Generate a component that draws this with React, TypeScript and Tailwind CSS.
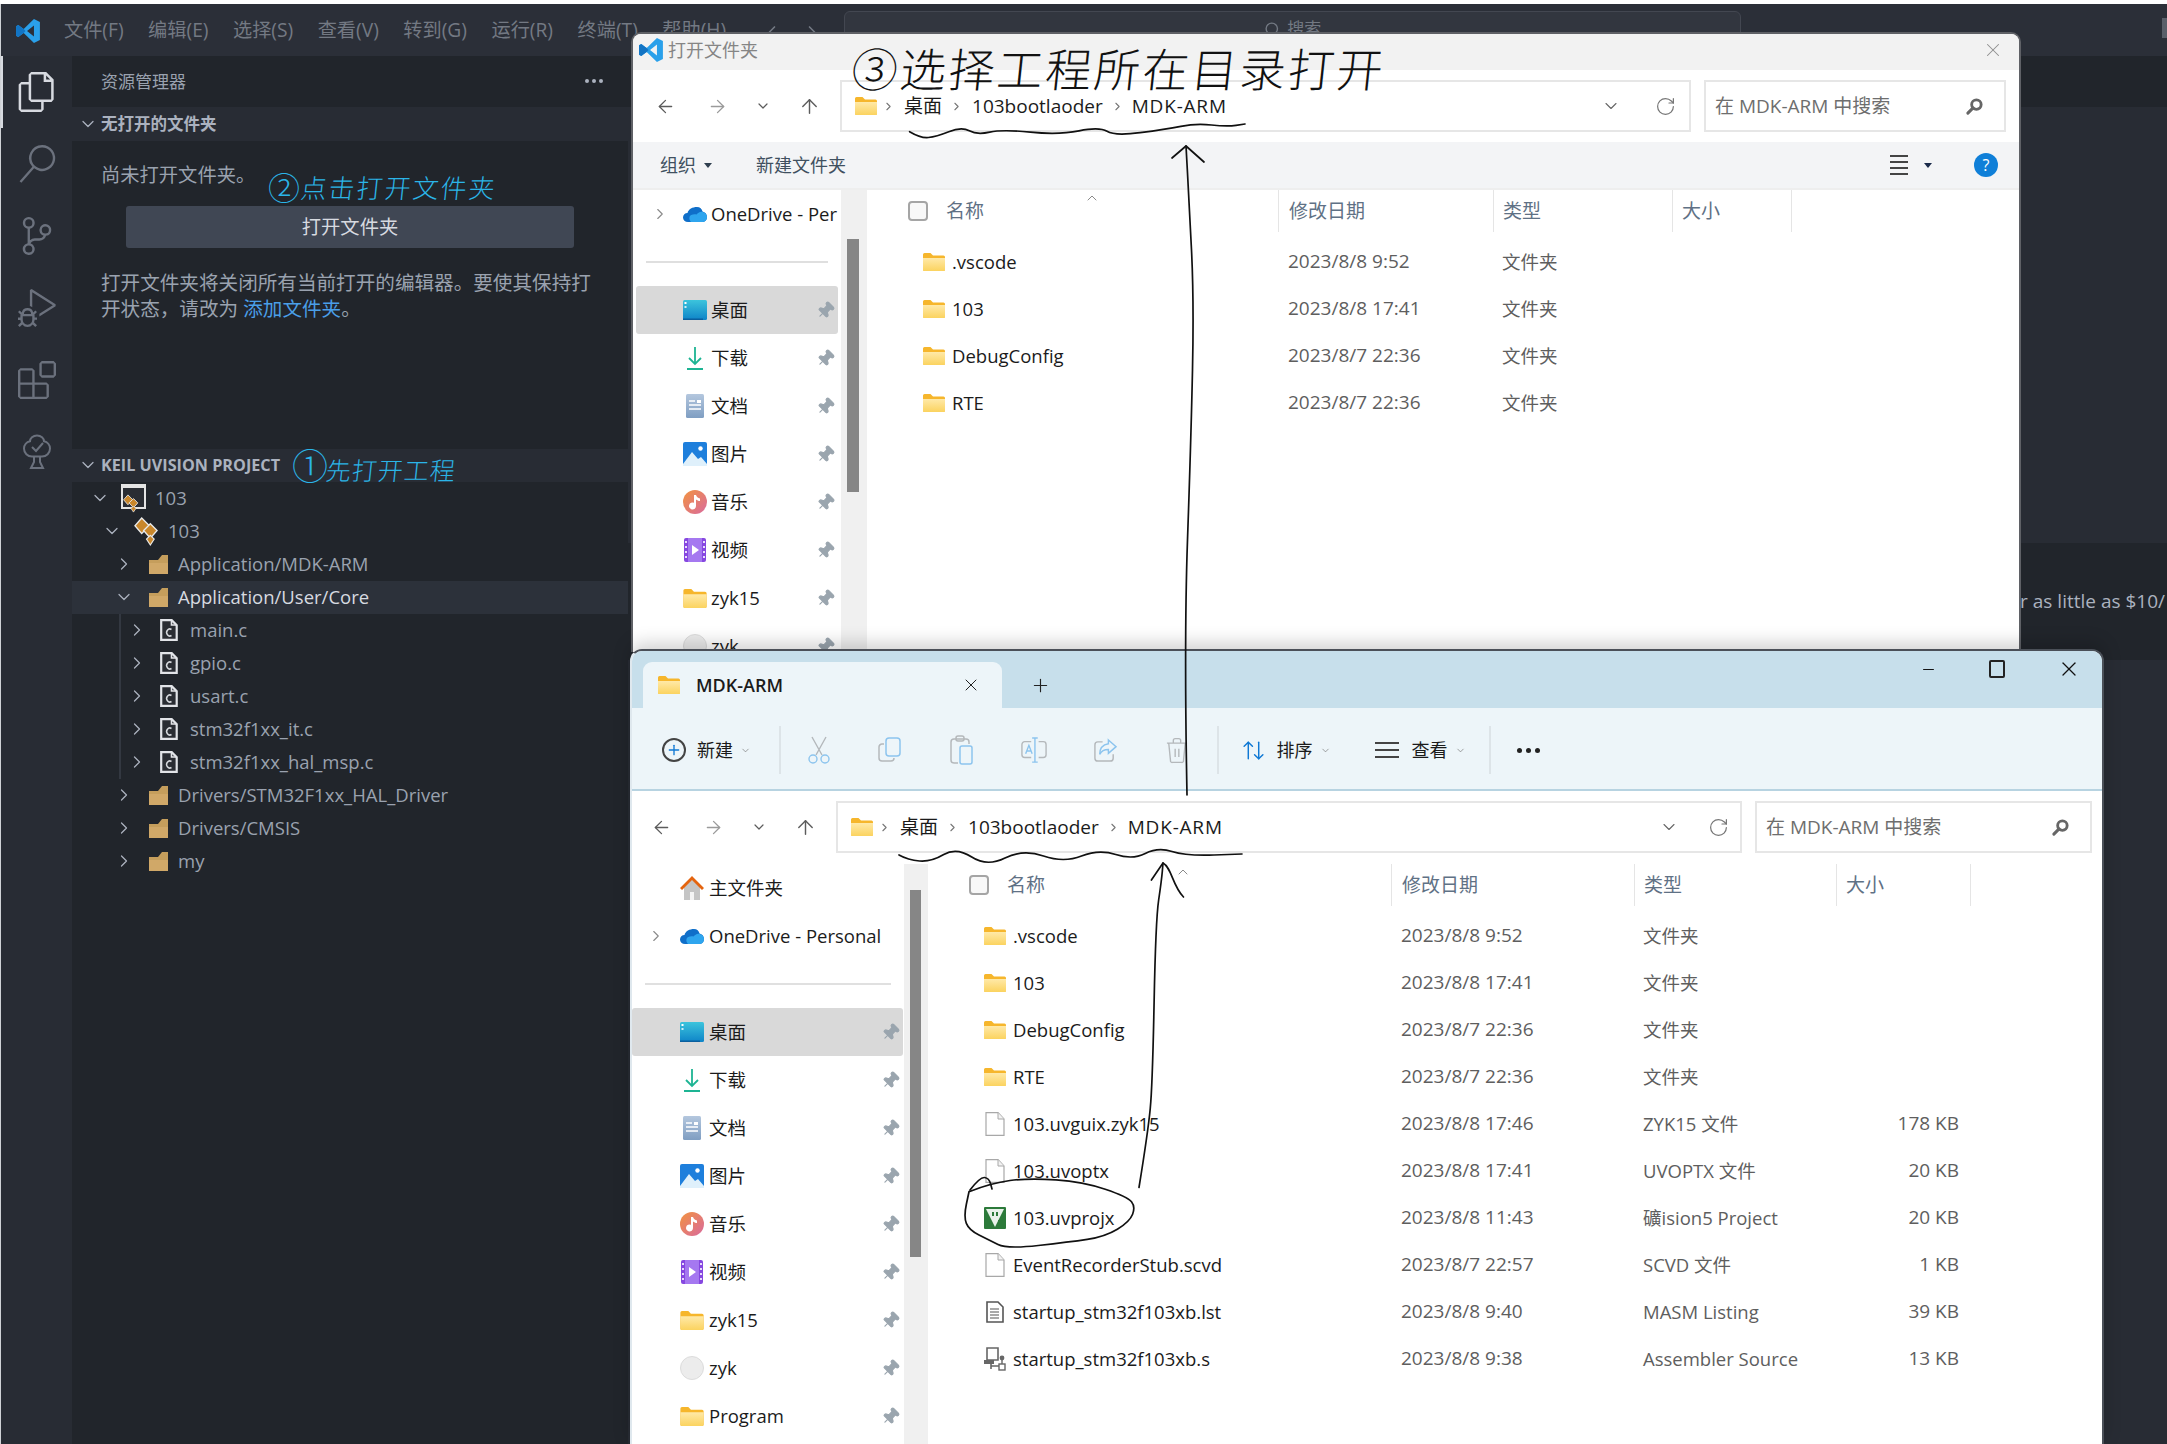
import React from "react";
import { ChevronDown, ChevronRight, Plus, X, Minus, Search, RotateCw, ArrowLeft, ArrowRight, ArrowUp, Pin, ArrowUpDown } from "lucide-react";
import { VscFiles, VscSearch, VscSourceControl, VscDebugAlt, VscExtensions } from "react-icons/vsc";

const smooth = (p: number[][]) => {
  let d = `M${p[0][0]} ${p[0][1]}`;
  for (let i = 1; i < p.length - 1; i++) {
    const mx = (p[i][0] + p[i + 1][0]) / 2;
    const my = (p[i][1] + p[i + 1][1]) / 2;
    d += ` Q${p[i][0]} ${p[i][1]} ${mx} ${my}`;
  }
  const l = p[p.length - 1];
  return d + ` L${l[0]} ${l[1]}`;
};

function VsLogo({ className }: { className: string }) {
  return (
    <svg viewBox="0 0 24 24" className={className}>
      <path d="M17.5 1 23 3.8v16.4L17.5 23 8 13.8 3 17.6 1 16.3V7.7l2-1.3 5 3.8Zm0 6-6.4 5 6.4 5Z" fill="#2aa0ea" fillRule="evenodd" />
      <path d="M3 6.4 1 7.7v8.6l2 1.3 5-3.8 1.7-1.8L8 10.2Z" fill="#1274c4" />
    </svg>
  );
}

function TreeCheckIcon() {
  return (
    <svg viewBox="0 0 32 36" className="w-[32px] h-[36px]" fill="none" stroke="#6b717d" strokeWidth="2">
      <path d="M16 1.5c4 0 7 3 7 5.8 3.5.8 6 3.8 6 7.2 0 4.600-3.600 8-8 8H11c-4.400 0-8-3.400-8-8 0-3.400 2.500-6.400 6-7.200C9 4.500 12 1.500 16 1.500Z" />
      <path d="M11 13l4 4 7-8" />
      <path d="M13 23v5l-3 6h12l-3-6v-5" />
    </svg>
  );
}

function TreeFolder() {
  return (
    <svg viewBox="0 0 19 19" className="w-[19px] h-[19px]">
      <path d="M0 5h9l4-5h6v19H0Z" fill="#c59e5c" />
      <path d="M0 8h19v11H0Z" fill="#d0a868" />
    </svg>
  );
}

function CFile() {
  return (
    <svg viewBox="0 0 18 22" className="w-[18px] h-[22px]">
      <path d="M1.200 1.200h10.500l5 5v14.600H1.200Z" fill="#2a2d33" stroke="#e2e4e8" strokeWidth="2.200" />
      <path d="M11.500 1v5H17" fill="none" stroke="#e2e4e8" strokeWidth="1.600" />
      <path d="M11.500 10.500a3.200 3.500 0 1 0 0 6" fill="none" stroke="#d5d8dc" strokeWidth="1.500" />
    </svg>
  );
}

function Diamonds({ className }: { className: string }) {
  return (
    <svg viewBox="0 0 26 30" className={className}>
      <path d="M8 1 16 9 8 17 1 9Z" fill="#c9872b" stroke="#e9e9e9" strokeWidth="1.400" />
      <path d="M17 7 24 14 17 22 10 14Z" fill="#c9872b" stroke="#e9e9e9" strokeWidth="1.400" />
      <path d="M17 19 21 23 17 29 13 23Z" fill="#c9872b" stroke="#e9e9e9" strokeWidth="1.200" />
    </svg>
  );
}

function ProjectIcon() {
  return (
    <div className="relative w-[25px] h-[29px]">
      <div className="absolute left-0 top-0 w-[25px] h-[25px] border-2 border-[#e4e4e4] border-t-[4px] bg-[#2a2d33]" />
      <Diamonds className="absolute left-[2px] top-[10px] w-[16px] h-[19px]" />
    </div>
  );
}

function TreeRow({ pl, open, icon, label, active, iconGap, textGap }: { pl: string; open?: boolean; icon: React.ReactNode; label: string; active?: boolean; iconGap: string; textGap: string }) {
  return (
    <div className={`flex items-center h-[33px] whitespace-nowrap text-[18.500px] ${pl} ${active ? "bg-[#2c313a] text-[#d7dae0]" : "text-[#9aa2af]"}`}>
      {open ? <ChevronDown size={20} strokeWidth={1.500} className="text-[#abb2bf] shrink-0" /> : <ChevronRight size={20} strokeWidth={1.500} className="text-[#abb2bf] shrink-0" />}
      <span className={`flex items-center ${iconGap}`}>{icon}</span>
      <span className={textGap}>{label}</span>
    </div>
  );
}

function VsSidebar() {
  return (
    <div className="w-[556px] shrink-0 bg-[#21252b] flex flex-col text-[#abb2bf] text-[19px]">
      <div className="h-[51px] flex items-center justify-between pl-[29px] pr-[25px] text-[17px] text-[#9aa2af]">
        <span>资源管理器</span>
        <span className="flex gap-[3px] pb-[2px]">
          <i className="w-[4px] h-[4px] rounded-full bg-[#abb2bf]" />
          <i className="w-[4px] h-[4px] rounded-full bg-[#abb2bf]" />
          <i className="w-[4px] h-[4px] rounded-full bg-[#abb2bf]" />
        </span>
      </div>
      <div className="h-[34px] bg-[#282c34] flex items-center pl-[6px] gap-[3px] text-[16.500px] font-bold">
        <ChevronDown size={20} strokeWidth={1.500} />
        <span>无打开的文件夹</span>
      </div>
      <div className="h-[308px] pl-[29px] pr-[30px] text-[19.600px] leading-[26px] text-[#9aa2af]">
        <p className="mt-[21px] text-[19.300px]">尚未打开文件夹。</p>
        <div className="ml-[25px] mt-[18px] w-[448px] h-[42px] rounded-[3px] bg-[#404754] text-[#d7dae0] text-[19.300px] flex items-center justify-center">打开文件夹</div>
        <p className="mt-[22px] w-[495px]">打开文件夹将关闭所有当前打开的编辑器。要使其保持打开状态，请改为 <span className="text-[#4a9fe8]">添加文件夹</span>。</p>
      </div>
      <div className="h-[32.500px] bg-[#282c34] flex items-center pl-[6px] gap-[3px] text-[16.200px] font-bold">
        <ChevronDown size={20} strokeWidth={1.500} />
        <span>KEIL UVISION PROJECT</span>
      </div>
      <div className="relative">
        <TreeRow pl="pl-[18px]" open icon={<ProjectIcon />} label="103" iconGap="ml-[11px]" textGap="ml-[9px]" />
        <TreeRow pl="pl-[30px]" open icon={<Diamonds className="w-[25px] h-[29px]" />} label="103" iconGap="ml-[12px]" textGap="ml-[9px]" />
        <TreeRow pl="pl-[42px]" icon={<TreeFolder />} label="Application/MDK-ARM" iconGap="ml-[15px]" textGap="ml-[10px]" />
        <TreeRow pl="pl-[42px]" open active icon={<TreeFolder />} label="Application/User/Core" iconGap="ml-[15px]" textGap="ml-[10px]" />
        <div className="border-l-2 border-[#333841] ml-[47px] pl-[6px]">
          {["main.c", "gpio.c", "usart.c", "stm32f1xx_it.c", "stm32f1xx_hal_msp.c"].map((f) => (
            <TreeRow key={f} pl="pl-[0px]" icon={<CFile />} label={f} iconGap="ml-[13px]" textGap="ml-[12px]" />
          ))}
        </div>
        <TreeRow pl="pl-[42px]" icon={<TreeFolder />} label="Drivers/STM32F1xx_HAL_Driver" iconGap="ml-[15px]" textGap="ml-[10px]" />
        <TreeRow pl="pl-[42px]" icon={<TreeFolder />} label="Drivers/CMSIS" iconGap="ml-[15px]" textGap="ml-[10px]" />
        <TreeRow pl="pl-[42px]" icon={<TreeFolder />} label="my" iconGap="ml-[15px]" textGap="ml-[10px]" />
      </div>
    </div>
  );
}

function VsCode() {
  const menus = ["文件(F)", "编辑(E)", "选择(S)", "查看(V)", "转到(G)", "运行(R)", "终端(T)", "帮助(H)"];
  return (
    <div className="flex-1 flex flex-col min-h-0 border-l border-l-[#cfd2d6]">
      <div className="h-[52px] bg-[#2b2f38] flex items-start shrink-0">
        <div className="w-[63px] pl-[14px] pt-[14px] shrink-0"><VsLogo className="w-[26px] h-[26px]" /></div>
        <div className="flex gap-[24.500px] pt-[14px] text-[19.200px] leading-[24px] text-[#737983] whitespace-nowrap">
          {menus.map((m) => <span key={m}>{m}</span>)}
        </div>
        <div className="flex ml-[36px] gap-[20px] pt-[18px] text-[#737983]">
          <ChevronRight size={20} className="rotate-180" />
          <ChevronRight size={20} />
        </div>
        <div className="ml-[22px] mt-[7px] w-[897px] h-[36px] rounded-[6px] bg-[#32363f] border border-[#434751] flex items-center justify-center gap-[6px] text-[17px] text-[#737983]">
          <Search size={17} /> <span>搜索</span>
        </div>
        <div className="ml-auto mt-[14px] w-[5px] h-[20px] bg-[#5a5f69]" />
      </div>
      <div className="flex flex-1 min-h-0">
        <div className="w-[71px] shrink-0 bg-[#282c34] flex flex-col text-[#6b717d]">
          <div className="relative h-[72px] flex items-center justify-center text-[#d7dae0]">
            <div className="absolute left-0 top-0 h-[72px] w-[2px] bg-[#d7dae0]" />
            <VscFiles size={40} />
          </div>
          <div className="h-[72px] flex items-center justify-center"><VscSearch size={38} /></div>
          <div className="h-[72px] flex items-center justify-center"><VscSourceControl size={38} /></div>
          <div className="h-[72px] flex items-center justify-center"><VscDebugAlt size={38} /></div>
          <div className="h-[72px] flex items-center justify-center"><VscExtensions size={38} /></div>
          <div className="h-[72px] flex items-center justify-center"><TreeCheckIcon /></div>
        </div>
        <VsSidebar />
        <div className="flex-1 flex flex-col bg-[#282c34]">
          <div className="h-[51px] bg-[#21252b] shrink-0" />
          <div className="h-[436px] shrink-0" />
          <div className="h-[117px] bg-[#21252b] flex items-center justify-end pr-[2px] text-[19px] text-[#abb2bf] whitespace-nowrap shrink-0">or as little as $10/</div>
        </div>
      </div>
    </div>
  );
}

function YFolder({ className = "w-[22px] h-[18px]" }: { className?: string }) {
  return (
    <svg viewBox="0 0 22 18" className={className}>
      <defs>
        <linearGradient id="fy" x1="0" y1="0" x2="0" y2="1">
          <stop offset="0" stopColor="#ffe9a8" />
          <stop offset="1" stopColor="#fbd35f" />
        </linearGradient>
      </defs>
      <path d="M0 1.500A1.500 1.500 0 0 1 1.500 0h6L10 2.500h10.500A1.500 1.500 0 0 1 22 4v12.500a1.500 1.500 0 0 1-1.500 1.500h-19A1.500 1.500 0 0 1 0 16.500Z" fill="#f6b62c" />
      <path d="M0 5h22v11.500a1.500 1.500 0 0 1-1.500 1.500h-19A1.500 1.500 0 0 1 0 16.500Z" fill="url(#fy)" />
    </svg>
  );
}

function Crumbs() {
  const Chev = ({ cls }: { cls: string }) => <ChevronRight size={13} strokeWidth={2} className={`text-[#777] shrink-0 ${cls}`} />;
  return (
    <div className="flex items-center pl-[13px] flex-1 min-w-0 whitespace-nowrap text-[#1b1b1b]">
      <YFolder />
      <Chev cls="ml-[5px]" />
      <span className="ml-[9px]">桌面</span>
      <Chev cls="ml-[8px]" />
      <span className="ml-[9px]">103bootlaoder</span>
      <Chev cls="ml-[8px]" />
      <span className="ml-[8px] tracking-[0.800px]">MDK-ARM</span>
    </div>
  );
}

function NavBar({ cls, left, boxW, searchW, h, vGap, rGap }: { cls: string; left: string; boxW: string; searchW: string; h: string; vGap: string; rGap: string }) {
  return (
    <div className={`flex items-start bg-white shrink-0 ${cls} ${left}`}>
      <div className={`w-[52px] ${h} flex items-center justify-center text-[#5c5c5c]`}><ArrowLeft size={21} strokeWidth={1.500} /></div>
      <div className={`w-[52px] ${h} flex items-center justify-center text-[#9a9a9a]`}><ArrowRight size={21} strokeWidth={1.500} /></div>
      <div className={`w-[40px] ${h} flex items-center justify-center text-[#5c5c5c]`}><ChevronDown size={16} strokeWidth={1.800} /></div>
      <div className={`w-[52px] ${h} flex items-center justify-center text-[#5c5c5c]`}><ArrowUp size={23} strokeWidth={1.500} /></div>
      <div className={`${boxW} ${h} ml-[5px] border-2 border-[#e6e6e6] flex items-center`}>
        <Crumbs />
        <ChevronDown size={20} strokeWidth={1.300} className={`text-[#666] ${vGap}`} />
        <RotateCw size={21} strokeWidth={1.400} className={`text-[#777] ${rGap}`} />
      </div>
      <div className={`${searchW} ${h} ml-[13px] border-2 border-[#e6e6e6] flex items-center justify-between pl-[9px] pr-[20px] text-[#6e6e6e] whitespace-nowrap`}>
        <span>在 MDK-ARM 中搜索</span>
        <svg viewBox="0 0 20 20" className="w-[19px] h-[21px]">
          <circle cx="12" cy="8" r="5" fill="none" stroke="#666" strokeWidth="3" />
          <path d="M8.500 11.500 3 17" stroke="#666" strokeWidth="3.200" strokeLinecap="round" />
        </svg>
      </div>
    </div>
  );
}

function PinIcon() {
  return <Pin size={19} strokeWidth={1.500} className="text-[#9aa5ae] fill-[#9aa5ae] rotate-45 shrink-0" />;
}

const Desktop = () => (
  <svg viewBox="0 0 24 20" className="w-[24px] h-[20px]">
    <defs><linearGradient id="dk" x1="0" y1="0" x2="0" y2="1"><stop offset="0" stopColor="#3cc4dc" /><stop offset="1" stopColor="#0e84c8" /></linearGradient></defs>
    <rect width="24" height="20" rx="1.500" fill="url(#dk)" />
    <rect x="1.500" y="2" width="2" height="2" fill="#fff" />
    <rect x="1.500" y="6" width="2" height="2" fill="#cfeef5" />
    <rect x="0" y="18.500" width="20" height="1.500" fill="#0a5f9e" />
  </svg>
);
const Download = () => (
  <svg viewBox="0 0 24 24" className="w-[24px] h-[24px]" fill="none" stroke="#1db493" strokeWidth="1.800">
    <path d="M12 1v17M6 12l6 6 6-6" />
    <path d="M4 23h16" strokeWidth="2" />
  </svg>
);
const Docs = () => (
  <svg viewBox="0 0 20 24" className="w-[20px] h-[24px]">
    <defs><linearGradient id="dc" x1="0" y1="0" x2="0" y2="1"><stop offset="0" stopColor="#b4c7de" /><stop offset="1" stopColor="#7f9ec2" /></linearGradient></defs>
    <rect x="1" width="18" height="24" rx="1.500" fill="url(#dc)" />
    <path d="M4 7h6M4 11h12M4 15h12" stroke="#fff" strokeWidth="1.400" />
    <path d="M12 6h4v3h-4Z" fill="#fff" />
  </svg>
);
const Pictures = () => (
  <svg viewBox="0 0 24 24" className="w-[24px] h-[24px]">
    <rect width="24" height="24" rx="2" fill="#1e7fdc" />
    <circle cx="17.500" cy="6.500" r="2.200" fill="#fff" />
    <path d="M0 22 9 10l6 7 3-2 6 7v2H0Z" fill="#dff0fb" />
  </svg>
);
const Music = () => (
  <svg viewBox="0 0 24 24" className="w-[24px] h-[24px]">
    <defs><linearGradient id="ms" x1="0" y1="0" x2="1" y2="1"><stop offset="0" stopColor="#f2933f" /><stop offset="1" stopColor="#d96a9e" /></linearGradient></defs>
    <circle cx="12" cy="12" r="12" fill="url(#ms)" />
    <path d="M11 5h2c.5 2 2 3 4 3.500V11c-1.500 0-3-.6-4-1.500V16a3.500 3.500 0 1 1-2-3.200Z" fill="#fff" />
  </svg>
);
const Video = () => (
  <svg viewBox="0 0 22 24" className="w-[22px] h-[24px]">
    <rect width="22" height="24" rx="2" fill="#8647e0" />
    <rect x="4" y="0" width="14" height="24" fill="#a578f0" />
    <path d="M8 7v10l7-5Z" fill="#fff" />
    <path d="M1 3h2v2H1ZM1 8h2v2H1ZM1 13h2v2H1ZM1 18h2v2H1ZM19 3h2v2h-2ZM19 8h2v2h-2ZM19 13h2v2h-2ZM19 18h2v2h-2Z" fill="#e8dcfb" />
  </svg>
);
const Avatar = () => <div className="w-[24px] h-[24px] rounded-full bg-[#ececec] border border-[#dcdcdc]" />;
const Cloud = () => (
  <svg viewBox="0 0 24 16" className="w-[24px] h-[16px]">
    <path d="M14 1c3 0 5 2 5.500 4.500C22 6 24 8 24 11c0 3-2 5-5 5H5c-3 0-5-2-5-4.500S2 7 4.500 7C5.500 3 9.500 1 14 1Z" fill="#0f6fc9" />
    <path d="M8 16h11c3 0 5-2 5-5 0-2.500-2-4.500-4-5-3-1-5 1-6.500 2.500C10 8 7 9 6.500 11 6 13 7 15 8 16Z" fill="#2ea5ee" />
  </svg>
);
const Home = () => (
  <svg viewBox="0 0 24 24" className="w-[24px] h-[24px]">
    <path d="M4 11v13h16V11L12 3Z" fill="#c5c5c5" />
    <path d="M10 24v-8h4v8Z" fill="#f4f4f4" />
    <path d="M0 12 12 0l12 12-2 2L12 4 2 14Z" fill="#e4640f" />
  </svg>
);

function NavRow({ icon, label, selected, pin = true, chevron, indent, gap, cls = "mx-[3px]" }: { icon: React.ReactNode; label: string; selected?: boolean; pin?: boolean; chevron?: boolean; indent: string; gap: string; cls?: string }) {
  return (
    <div className={`relative h-[48px] flex items-center rounded-[3px] whitespace-nowrap ${cls} ${indent} pr-[3px] text-[#1b1b1b] ${selected ? "bg-[#d9d9d9]" : ""}`}>
      {chevron && <span className="absolute left-[15px] text-[#8a8a8a]"><ChevronRight size={18} strokeWidth={1.500} /></span>}
      <span className="w-[24px] h-[24px] flex items-center justify-center shrink-0">{icon}</span>
      <span className={`${gap} text-[18.500px]`}>{label}</span>
      {pin && <span className="ml-auto"><PinIcon /></span>}
    </div>
  );
}

type Row = { icon: React.ReactNode; name: string; date: string; type: string; size?: string };

function FileList({ cols, rows, headH, pt, caretR }: { cols: string; rows: Row[]; headH: string; pt: string; caretR: string }) {
  return (
    <div className="flex-1 min-w-0 bg-white whitespace-nowrap">
      <div className={`grid ${cols} ${headH} text-[#5f7185] relative`}>
        <div className="relative flex items-center pl-[41px] gap-[18px]">
          <span className="w-[20px] h-[20px] rounded-[4px] border-2 border-[#a5a5a5] bg-[#f8f8f8]" />
          <span>名称</span>
          <ChevronDown size={16} strokeWidth={1.500} className={`absolute ${caretR} top-[0px] rotate-180 text-[#8a8a8a]`} />
        </div>
        <div className="border-l border-[#e5e5e5] pl-[10px] flex items-center">修改日期</div>
        <div className="border-l border-[#e5e5e5] pl-[9px] flex items-center">类型</div>
        <div className="border-x border-[#e5e5e5] pl-[9px] flex items-center">大小</div>
      </div>
      <div className={pt}>
        {rows.map((r) => (
          <div key={r.name} className={`grid ${cols} h-[47px] items-center text-[#5e5e5e]`}>
            <div className="flex items-center pl-[56px] gap-[7px] text-[#1b1b1b] text-[18.500px]">
              <span className="w-[22px] flex justify-center">{r.icon}</span>
              <span>{r.name}</span>
            </div>
            <div className="pl-[10px]">{r.date}</div>
            <div className="pl-[9px] text-[18.500px]">{r.type}</div>
            <div className="text-right pr-[12px]">{r.size}</div>
          </div>
        ))}
      </div>
    </div>
  );
}

const WhiteFile = () => (
  <svg viewBox="0 0 20 24" className="w-[20px] h-[24px]">
    <path d="M1 .7h12L19 7v16.300H1Z" fill="#fff" stroke="#a8a8a8" strokeWidth="1.200" />
    <path d="M13 .7V7h6" fill="#f2f2f2" stroke="#a8a8a8" strokeWidth="1" />
  </svg>
);
const UvIcon = () => (
  <svg viewBox="0 0 22 22" className="w-[22px] h-[22px]">
    <rect width="22" height="22" rx="1" fill="#2c7a3a" />
    <path d="M2 2h18L11 20Z" fill="#e8f2ea" />
    <path d="M8 5v4h2V5ZM12 5v4h2V5Z" fill="#2c7a3a" />
    <path d="M14 13h5v7h-5Z" fill="#2c7a3a" />
  </svg>
);
const LstIcon = () => (
  <svg viewBox="0 0 18 22" className="w-[18px] h-[22px]">
    <path d="M1 1h11l5 5v15H1Z" fill="#fff" stroke="#555" strokeWidth="1.600" />
    <path d="M4 8h9M4 11h9M4 14h9M4 17h9" stroke="#555" strokeWidth="1.200" />
  </svg>
);
const AsmIcon = () => (
  <svg viewBox="0 0 22 24" className="w-[22px] h-[24px]">
    <path d="M3 1h11v12H3Z" fill="#fff" stroke="#666" strokeWidth="1.600" />
    <path d="M0 13h10v4H0Z" fill="#666" />
    <path d="M7 17v5" stroke="#666" strokeWidth="1.600" />
    <circle cx="18" cy="11" r="2.400" fill="#666" />
    <path d="M18 13v5M7 19h8" stroke="#666" strokeWidth="1.400" />
    <rect x="15" y="17" width="6" height="6" fill="#fff" stroke="#666" strokeWidth="1.400" />
  </svg>
);

const dialogRows: Row[] = [
  { icon: <YFolder />, name: ".vscode", date: "2023/8/8 9:52", type: "文件夹" },
  { icon: <YFolder />, name: "103", date: "2023/8/8 17:41", type: "文件夹" },
  { icon: <YFolder />, name: "DebugConfig", date: "2023/8/7 22:36", type: "文件夹" },
  { icon: <YFolder />, name: "RTE", date: "2023/8/7 22:36", type: "文件夹" },
];

const allRows: Row[] = [
  ...dialogRows,
  { icon: <WhiteFile />, name: "103.uvguix.zyk15", date: "2023/8/8 17:46", type: "ZYK15 文件", size: "178 KB" },
  { icon: <WhiteFile />, name: "103.uvoptx", date: "2023/8/8 17:41", type: "UVOPTX 文件", size: "20 KB" },
  { icon: <UvIcon />, name: "103.uvprojx", date: "2023/8/8 11:43", type: "礦ision5 Project", size: "20 KB" },
  { icon: <WhiteFile />, name: "EventRecorderStub.scvd", date: "2023/8/7 22:57", type: "SCVD 文件", size: "1 KB" },
  { icon: <LstIcon />, name: "startup_stm32f103xb.lst", date: "2023/8/8 9:40", type: "MASM Listing", size: "39 KB" },
  { icon: <AsmIcon />, name: "startup_stm32f103xb.s", date: "2023/8/8 9:38", type: "Assembler Source", size: "13 KB" },
];

function OpenDialog() {
  return (
    <div className="absolute left-[631px] top-[32px] w-[1390px] h-[620px] rounded-t-[10px] overflow-hidden bg-white border-x-2 border-t-2 border-[#5f6166] flex flex-col text-[19px]">
      <div className="h-[36px] bg-[#f2f2f2] flex items-center pl-[5px] pr-[15px] pb-[4px] shrink-0 text-[18px] text-[#858585]">
        <VsLogo className="w-[26px] h-[26px]" />
        <span className="ml-[4px]">打开文件夹</span>
        <X size={22} strokeWidth={1.100} className="ml-auto text-[#8e8e8e]" />
      </div>
      <NavBar cls="h-[72px] pt-[10px]" left="pl-[6px]" boxW="w-[851px]" searchW="w-[302px]" h="h-[52px]" vGap="mr-[34px]" rGap="mr-[13px]" />
      <div className="h-[48px] bg-[#f3f4f6] border-b-2 border-[#eeeeee] flex items-center pl-[27px] pr-[21px] text-[18px] text-[#40505f] shrink-0">
        <span>组织</span>
        <span className="ml-[8px] w-0 h-0 border-x-[4px] border-x-transparent border-t-[5px] border-t-[#2f3f4f]" />
        <span className="ml-[44px]">新建文件夹</span>
        <span className="ml-auto flex flex-col gap-[4px]">
          <i className="block w-[18px] h-[2px] bg-[#444]" />
          <i className="block w-[18px] h-[2px] bg-[#444]" />
          <i className="block w-[18px] h-[2px] bg-[#444]" />
          <i className="block w-[18px] h-[2px] bg-[#444]" />
        </span>
        <span className="ml-[16px] w-0 h-0 border-x-[4px] border-x-transparent border-t-[5px] border-t-[#1a2a4a]" />
        <span className="ml-[42px] w-[24px] h-[24px] rounded-full bg-[#0f7fd8] text-white text-[16px] leading-[24px] text-center">?</span>
      </div>
      <div className="flex flex-1 min-h-0">
        <div className="w-[208px] shrink-0 overflow-hidden">
          <NavRow icon={<Cloud />} label="OneDrive - Per" chevron pin={false} indent="pl-[47px]" gap="ml-[4px]" />
          <div className="h-[48px] flex items-center pl-[13px]"><div className="w-[182px] h-[2px] bg-[#dfdfdf]" /></div>
          <NavRow selected icon={<Desktop />} label="桌面" indent="pl-[47px]" gap="ml-[4px]" />
          <NavRow icon={<Download />} label="下载" indent="pl-[47px]" gap="ml-[4px]" />
          <NavRow icon={<Docs />} label="文档" indent="pl-[47px]" gap="ml-[4px]" />
          <NavRow icon={<Pictures />} label="图片" indent="pl-[47px]" gap="ml-[4px]" />
          <NavRow icon={<Music />} label="音乐" indent="pl-[47px]" gap="ml-[4px]" />
          <NavRow icon={<Video />} label="视频" indent="pl-[47px]" gap="ml-[4px]" />
          <NavRow icon={<YFolder className="w-[24px] h-[19px]" />} label="zyk15" indent="pl-[47px]" gap="ml-[4px]" />
          <NavRow icon={<Avatar />} label="zyk" indent="pl-[47px]" gap="ml-[4px]" />
        </div>
        <div className="w-[26px] shrink-0 bg-[#f0f0f0] pt-[49px] pl-[6px]">
          <div className="w-[12px] h-[253px] bg-[#868686]" />
        </div>
        <FileList cols="grid-cols-[411px_215px_179px_120px]" rows={dialogRows} headH="h-[42px]" pt="pt-[6px]" caretR="right-[178px]" />
      </div>
    </div>
  );
}

function TbDivider({ ml }: { ml: string }) {
  return <div className={`${ml} w-[2px] h-[48px] bg-[#dde4e8] shrink-0`} />;
}

const Gray = "#b4b8bb";
const Blue = "#8cc4ee";
function ToolIcons() {
  const slot = "w-[71.600px] flex justify-center shrink-0";
  return (
    <>
      <div className={slot}>
        <svg viewBox="0 0 24 28" className="w-[24px] h-[28px]" fill="none" strokeWidth="1.400">
          <path d="M5 1l10 18M19 1 9 19" stroke={Gray} />
          <circle cx="6" cy="23" r="4" stroke={Blue} />
          <circle cx="18" cy="23" r="4" stroke={Blue} />
        </svg>
      </div>
      <div className={slot}>
        <svg viewBox="0 0 24 26" className="w-[24px] h-[26px]" fill="none" strokeWidth="1.500">
          <path d="M6 7H4a3 3 0 0 0-3 3v11a3 3 0 0 0 3 3h9a3 3 0 0 0 3-3" stroke={Gray} />
          <rect x="8" y="1" width="14" height="18" rx="3" stroke={Blue} />
        </svg>
      </div>
      <div className={slot}>
        <svg viewBox="0 0 24 30" className="w-[24px] h-[30px]" fill="none" strokeWidth="1.500">
          <path d="M8 28H4a3 3 0 0 1-3-3V7a3 3 0 0 1 3-3h12a3 3 0 0 1 3 3v2" stroke={Gray} />
          <rect x="6" y="1" width="8" height="5" rx="2" stroke={Gray} />
          <rect x="10" y="11" width="12" height="18" rx="2" stroke={Blue} />
        </svg>
      </div>
      <div className={slot}>
        <svg viewBox="0 0 28 30" className="w-[26px] h-[28px]" fill="none" strokeWidth="1.500">
          <path d="M11 6H4a3 3 0 0 0-3 3v11a3 3 0 0 0 3 3h7M19 6h5a3 3 0 0 1 3 3v11a3 3 0 0 1-3 3h-5" stroke={Gray} />
          <path d="M15 2v26M12 2h6M12 28h6M5 19l3.500-9L12 19M6.500 16h4" stroke={Blue} />
        </svg>
      </div>
      <div className={slot}>
        <svg viewBox="0 0 26 26" className="w-[25px] h-[25px]" fill="none" strokeWidth="1.500">
          <path d="M10 4H5a3 3 0 0 0-3 3v14a3 3 0 0 0 3 3h13a3 3 0 0 0 3-3v-4" stroke={Gray} />
          <path d="M16 2l8 7-8 7v-4c-4 0-7 1-9 5 0-6 3-10 9-11Z" stroke={Blue} />
        </svg>
      </div>
      <div className={slot}>
        <svg viewBox="0 0 24 28" className="w-[22px] h-[27px]" fill="none" stroke={Gray} strokeWidth="1.500">
          <path d="M1 6h22M8 6V3a2 2 0 0 1 2-2h4a2 2 0 0 1 2 2v3M3 6l2 20a2 2 0 0 0 2 1h10a2 2 0 0 0 2-1l2-20M10 12v9M14 12v9" />
        </svg>
      </div>
    </>
  );
}

function MainExplorer() {
  const caret = <ChevronDown size={11} strokeWidth={1.500} className="text-[#777] shrink-0" />;
  return (
    <div className="absolute left-[630px] top-[649px] w-[1474px] h-[795px] rounded-t-[12px] overflow-hidden bg-white border-x-2 border-t-2 border-[#4b5058] border-l-[#dfe8ee] flex flex-col text-[19px] shadow-[0_-6px_18px_rgba(0,0,0,0.18)]">
      <div className="h-[57px] bg-[#c7dfeb] flex items-end pl-[11px] shrink-0 relative">
        <div className="w-[359px] h-[46px] bg-[#edf5f9] rounded-t-[9px] flex items-center pl-[15px] pr-[21px]">
          <YFolder />
          <span className="ml-[16px] font-semibold text-[#1b1b1b] text-[18px]">MDK-ARM</span>
          <X size={20} strokeWidth={1.200} className="ml-auto text-[#222]" />
        </div>
        <Plus size={21} strokeWidth={1.300} className="ml-[28px] mb-[12px] text-[#222]" />
        <div className="ml-auto flex items-center self-start pt-[6px] pr-[21px] text-[#111]">
          <Minus size={17} strokeWidth={1.400} />
          <div className="ml-[52px] w-[16px] h-[18px] rounded-[2px] border-2 border-[#222]" />
          <X size={24} strokeWidth={1.300} className="ml-[52px]" />
        </div>
      </div>
      <div className="h-[83px] pt-[3px] bg-[#edf5f9] border-b-2 border-[#b7d3e1] flex items-center pl-[30px] text-[18px] text-[#1b1b1b] shrink-0 whitespace-nowrap">
        <span className="w-[24px] h-[24px] rounded-full border-2 border-[#444] flex items-center justify-center text-[#0f78d4] shrink-0"><Plus size={16} strokeWidth={2} /></span>
        <span className="ml-[11px]">新建</span>
        <span className="ml-[7px]">{caret}</span>
        <TbDivider ml="ml-[28px] mr-[2px]" />
        <ToolIcons />
        <TbDivider ml="ml-[4px]" />
        <ArrowUpDown size={25} strokeWidth={1.400} className="ml-[22px] text-[#0f78d4] shrink-0" />
        <span className="ml-[11px]">排序</span>
        <span className="ml-[7px]">{caret}</span>
        <span className="ml-[44px] flex flex-col gap-[5px]">
          <i className="block w-[24px] h-[2px] bg-[#444]" />
          <i className="block w-[24px] h-[2px] bg-[#444]" />
          <i className="block w-[24px] h-[2px] bg-[#444]" />
        </span>
        <span className="ml-[13px]">查看</span>
        <span className="ml-[7px]">{caret}</span>
        <TbDivider ml="ml-[23px]" />
        <span className="ml-[26px] flex gap-[4px]">
          <i className="w-[5px] h-[5px] rounded-full bg-[#222]" />
          <i className="w-[5px] h-[5px] rounded-full bg-[#222]" />
          <i className="w-[5px] h-[5px] rounded-full bg-[#222]" />
        </span>
      </div>
      <NavBar cls="h-[73px] pt-[10px]" left="pl-[3px]" boxW="w-[906px]" searchW="w-[337px]" h="h-[52px]" vGap="mr-[29px]" rGap="mr-[11px]" />
      <div className="flex flex-1 min-h-0">
        <div className="w-[271px] shrink-0 overflow-hidden">
          <NavRow icon={<Home />} label="主文件夹" pin={false} indent="pl-[48px]" gap="ml-[5px]" cls="mx-0" />
          <NavRow icon={<Cloud />} label="OneDrive - Personal" chevron pin={false} indent="pl-[48px]" gap="ml-[5px]" cls="mx-0" />
          <div className="h-[48px] flex items-center pl-[13px]"><div className="w-[246px] h-[2px] bg-[#e0e0e0]" /></div>
          <NavRow selected icon={<Desktop />} label="桌面" indent="pl-[48px]" gap="ml-[5px]" cls="mx-0" />
          <NavRow icon={<Download />} label="下载" indent="pl-[48px]" gap="ml-[5px]" cls="mx-0" />
          <NavRow icon={<Docs />} label="文档" indent="pl-[48px]" gap="ml-[5px]" cls="mx-0" />
          <NavRow icon={<Pictures />} label="图片" indent="pl-[48px]" gap="ml-[5px]" cls="mx-0" />
          <NavRow icon={<Music />} label="音乐" indent="pl-[48px]" gap="ml-[5px]" cls="mx-0" />
          <NavRow icon={<Video />} label="视频" indent="pl-[48px]" gap="ml-[5px]" cls="mx-0" />
          <NavRow icon={<YFolder className="w-[24px] h-[19px]" />} label="zyk15" indent="pl-[48px]" gap="ml-[5px]" cls="mx-0" />
          <NavRow icon={<Avatar />} label="zyk" indent="pl-[48px]" gap="ml-[5px]" cls="mx-0" />
          <NavRow icon={<YFolder className="w-[24px] h-[19px]" />} label="Program" indent="pl-[48px]" gap="ml-[5px]" cls="mx-0" />
        </div>
        <div className="w-[24px] shrink-0 bg-[#f0f0f0] pt-[26px] pl-[6px] ml-[1px]">
          <div className="w-[11px] h-[367px] bg-[#868686]" />
        </div>
        <FileList cols="grid-cols-[463px_243px_202px_135px]" rows={allRows} headH="h-[42px]" pt="pt-[6px]" caretR="right-[200px]" />
      </div>
    </div>
  );
}

function Strokes() {
  const ink = "#111";
  return (
    <svg width="2167" height="1444" viewBox="0 0 2167 1444" className="absolute left-0 top-0 pointer-events-none" fill="none" stroke={ink} strokeWidth="1.700" strokeLinecap="round" strokeLinejoin="round">
      <path d={smooth([[909.6, 131.7], [920.8, 138.3], [936, 136.7], [961.6, 126.7], [977, 135], [1002.4, 129.3], [1058.6, 135], [1099.4, 126.7], [1114.7, 136], [1165.7, 129.3], [1196, 123.3], [1227, 126.7], [1245, 124]])} />
      <path d={smooth([[1187, 795], [1184, 640], [1191, 440], [1194, 300], [1189, 200], [1186, 146]])} />
      <path d="M1172 158 1186 146 1204 162" />
      <path d={smooth([[899, 855], [908, 860], [931, 862], [956.5, 847], [987, 867], [1023, 849], [1064, 863], [1099, 849], [1132.5, 860], [1158, 847], [1186, 856], [1242, 854]])} />
      <path d={smooth([[1139, 1187.5], [1148, 1132], [1152.5, 1085], [1155.7, 920], [1161.6, 880], [1163, 863]])} />
      <path d="M1151.400 880 1163 863C1172 868 1172 885 1183.500 897" />
      <path d={smooth([[969, 1191.7], [991, 1183], [1029, 1178], [1083, 1181.7], [1127.5, 1196.7], [1135.5, 1206.7], [1129.7, 1221.7], [1105, 1236.7], [1069.5, 1242], [1007, 1249], [989, 1240], [969, 1230], [963.7, 1216.7], [969, 1191.7]])} />
      <path d={smooth([[970, 1190], [980, 1177], [989, 1178], [992, 1189]])} />
    </svg>
  );
}

function Annotations() {
  const hand = "absolute whitespace-nowrap leading-none font-['Noto_Sans_CJK_SC',sans-serif] font-light";
  return (
    <>
      <span className={`${hand} left-[268px] top-[170px] text-[32px] text-[#2bb5e8]`}>②</span>
      <span className={`${hand} left-[301px] top-[174px] text-[26px] tracking-[2px] -skew-x-6 text-[#2bb5e8]`}>点击打开文件夹</span>
      <span className={`${hand} left-[292px] top-[446px] text-[36px] text-[#2bb5e8]`}>①</span>
      <span className={`${hand} left-[326px] top-[457px] text-[25px] tracking-[1px] -skew-x-6 text-[#2bb5e8]`}>先打开工程</span>
      <span className={`${hand} left-[852px] top-[44px] text-[46px] tracking-[2.500px] -skew-x-6 text-[#111]`}>③选择工程所在目录打开</span>
    </>
  );
}

export default function App() {
  return (
    <div className="relative w-[2167px] h-[1444px] overflow-hidden bg-[#282c34] font-['Open_Sans','Noto_Sans_CJK_SC',sans-serif]">
      <div className="h-[4px] bg-white" />
      <div className="h-[1440px] flex">
        <VsCode />
      </div>
      <OpenDialog />
      <MainExplorer />
      <Strokes />
      <Annotations />
    </div>
  );
}
